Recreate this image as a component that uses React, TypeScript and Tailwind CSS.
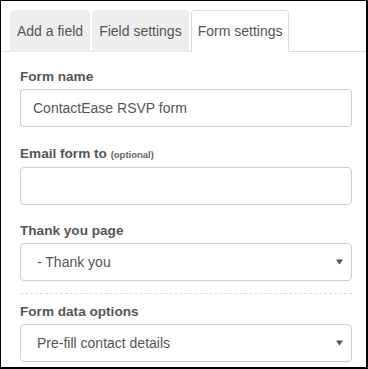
import React from "react";

const Arrow = () => (
  <svg width="7" height="6" viewBox="0 0 7 6" className="absolute right-[8px] top-1/2 -translate-y-1/2">
    <path d="M0 0.5 H7 L3.5 5.5 Z" fill="#555" />
  </svg>
);

export default function App() {
  const font = { fontFamily: '"Liberation Sans", Arial, sans-serif' };
  return (
    <div
      className="w-[368px] h-[369px] box-border border-l border-t border-r-2 border-b-2 border-black bg-white overflow-hidden"
      style={font}
    >
      <div className="mt-[9px] pl-[9px] flex border-b border-[#ddd] h-[42px]">
        <div className="h-[42px] mr-[2px] px-[6px] border border-transparent bg-[#eee] rounded-t-[4px] text-[14px] leading-[20px] py-[10px] text-[#555] whitespace-nowrap">
          Add a field
        </div>
        <div className="h-[42px] mr-[2px] px-[6px] border border-transparent bg-[#eee] rounded-t-[4px] text-[14px] leading-[20px] py-[10px] text-[#555] whitespace-nowrap">
          Field settings
        </div>
        <div className="h-[42px] mr-[2px] px-[6px] border border-[#ddd] border-b-white bg-white rounded-t-[4px] text-[14px] leading-[20px] py-[10px] text-[#555] whitespace-nowrap relative z-10">
          Form settings
        </div>
      </div>
      <div className="pl-[19px] pr-[14px] pt-[16px] flex flex-col">
        <div className="text-[13.6px] leading-[17px] h-[17px] font-bold text-[#555] whitespace-nowrap">Form name</div>
        <div className="mt-[4px] h-[38px] border border-[#ccc] rounded-[4px] pl-[12px] flex items-center text-[14px] text-[#555]">
          ContactEase RSVP form
        </div>
        <div className="mt-[18px] text-[13.6px] leading-[17px] h-[17px] font-bold text-[#555] whitespace-nowrap">
          Email form to <span className="text-[9.5px] font-bold text-[#666]">(optional)</span>
        </div>
        <div className="mt-[5px] h-[38px] border border-[#ccc] rounded-[4px]" />
        <div className="mt-[17px] text-[13.6px] leading-[17px] h-[17px] font-bold text-[#555] whitespace-nowrap">Thank you page</div>
        <div className="mt-[4px] h-[38px] border border-[#ccc] rounded-[4px] pl-[16px] flex items-center text-[14px] text-[#555] relative">
          - Thank you
          <Arrow />
        </div>
        <div className="mt-[12px] border-t border-dashed border-[#ddd]" />
        <div className="mt-[9px] text-[13.6px] leading-[17px] h-[17px] font-bold text-[#555] whitespace-nowrap">Form data options</div>
        <div className="mt-[4px] h-[38px] border border-[#ccc] rounded-[4px] pl-[16px] flex items-center text-[14px] text-[#555] relative">
          Pre-fill contact details
          <Arrow />
        </div>
      </div>
    </div>
  );
}
